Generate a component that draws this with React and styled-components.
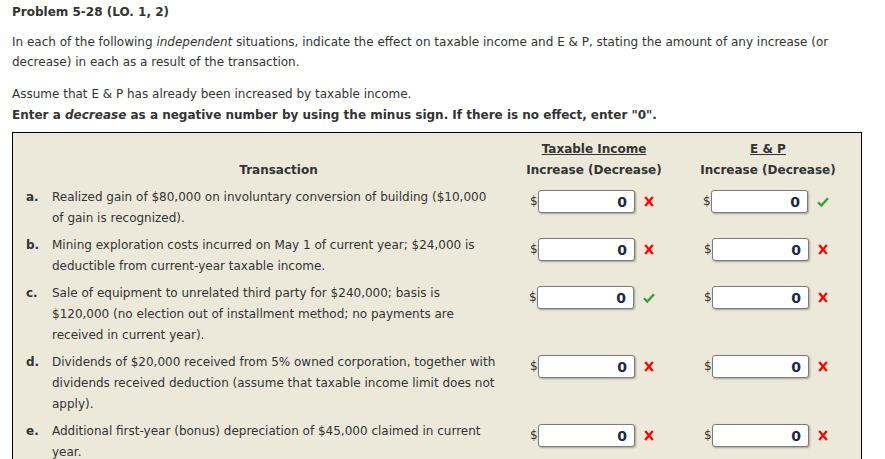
import React from "react";
import styled, { createGlobalStyle } from "styled-components";

const GlobalStyle = createGlobalStyle`
  html, body {
    margin: 0;
    padding: 0;
    background: #fff;
    overflow: hidden;
  }
  body {
    font-family: "DejaVu Sans", Verdana, sans-serif;
    font-size: 12px;
    color: #333;
  }
`;

const rows = [
  {
    letter: "a.",
    text: "Realized gain of $80,000 on involuntary conversion of building ($10,000 of gain is recognized).",
    ti: false,
    ep: true,
  },
  {
    letter: "b.",
    text: "Mining exploration costs incurred on May 1 of current year; $24,000 is deductible from current-year taxable income.",
    ti: false,
    ep: false,
  },
  {
    letter: "c.",
    text: "Sale of equipment to unrelated third party for $240,000; basis is $120,000 (no election out of installment method; no payments are received in current year).",
    ti: true,
    ep: false,
  },
  {
    letter: "d.",
    text: "Dividends of $20,000 received from 5% owned corporation, together with dividends received deduction (assume that taxable income limit does not apply).",
    ti: false,
    ep: false,
  },
  {
    letter: "e.",
    text: "Additional first-year (bonus) depreciation of $45,000 claimed in current year.",
    ti: false,
    ep: false,
  },
];

function Mark({ correct }) {
  if (correct) {
    return (
      <Icon width="12" height="10" viewBox="0 0 12 10">
        <path d="M1 5.2 L4.3 8.6 L11 1.2" fill="none" stroke="#3b9a3b" strokeWidth="2.3" />
      </Icon>
    );
  }
  return (
    <Icon width="10" height="11" viewBox="0 0 10 11">
      <path d="M1.2 1 L8.8 10 M8.8 1 L1.2 10" fill="none" stroke="#f00" strokeWidth="2.3" />
    </Icon>
  );
}

function Answer({ correct }) {
  return (
    <AnswerCell>
      <Dollar>$</Dollar>
      <AmountInput type="text" defaultValue="0" />
      <Mark correct={correct} />
    </AnswerCell>
  );
}

export default function App() {
  return (
    <Page>
      <GlobalStyle />
      <Title>Problem 5-28 (LO. 1, 2)</Title>
      <Para>
        In each of the following <em>independent</em> situations, indicate the effect on taxable income and E &amp; P, stating the amount of any increase (or decrease) in each as a result of the transaction.
      </Para>
      <Assume>Assume that E &amp; P has already been increased by taxable income.</Assume>
      <Instruction>
        Enter a <em>decrease</em> as a negative number by using the minus sign. If there is no effect, enter "0".
      </Instruction>

      <Box>
        <HeadRow>
          <span />
          <span />
          <HeadCell><u>Taxable Income</u></HeadCell>
          <HeadCell><u>E &amp; P</u></HeadCell>
        </HeadRow>
        <HeadRow $spaced>
          <span />
          <HeadCell>Transaction</HeadCell>
          <HeadCell>Increase (Decrease)</HeadCell>
          <HeadCell>Increase (Decrease)</HeadCell>
        </HeadRow>
        {rows.map((r) => (
          <ItemRow key={r.letter}>
            <Letter>{r.letter}</Letter>
            <ItemText>{r.text}</ItemText>
            <Answer correct={r.ti} />
            <Answer correct={r.ep} />
          </ItemRow>
        ))}
      </Box>
    </Page>
  );
}

const Page = styled.div`
  padding: 2px 12px 0 12px;
  width: 850px;
`;

const Title = styled.h3`
  margin: 0;
  font-size: 12px;
  font-weight: bold;
  line-height: 20px;
`;

const Para = styled.p`
  margin: 10px 0 0;
  line-height: 20px;
`;

const Assume = styled.p`
  margin: 12px 0 0;
  line-height: 21px;
`;

const Instruction = styled.p`
  margin: 0;
  font-weight: bold;
  line-height: 21px;
`;

const Box = styled.div`
  margin-top: 6px;
  background: #ece9da;
  border: 1px solid #000;
  padding: 6px 8px 40px 13px;
`;

const Row = styled.div`
  display: grid;
  grid-template-columns: 26px 453px 178px 170px;
`;

const HeadRow = styled(Row)`
  line-height: 21px;
  padding-bottom: ${(p) => (p.$spaced ? "3px" : "0")};
`;

const ItemRow = styled(Row)`
  line-height: 20.8px;
  padding: 3.25px 0;
`;

const HeadCell = styled.div`
  font-weight: bold;
  text-align: center;
`;

const Letter = styled.span`
  font-weight: bold;
`;

const ItemText = styled.span`
  padding-right: 6px;
`;

const AnswerCell = styled.div`
  display: flex;
  align-items: center;
  justify-content: center;
  align-self: start;
  margin-top: 3px;
  padding-right: 4px;
`;

const Dollar = styled.span`
  font-size: 12px;
  line-height: 23px;
  width: 8px;
`;

const AmountInput = styled.input`
  box-sizing: border-box;
  width: 97px;
  height: 23px;
  padding: 0 7px;
  border: 1px solid #7b7b7b;
  border-radius: 3px;
  box-shadow: 1px 1px 2px rgba(0, 0, 0, 0.3);
  background: #fff;
  font-family: "DejaVu Sans", Verdana, sans-serif;
  font-size: 14px;
  font-weight: bold;
  color: #1c2844;
  text-align: right;
  outline: none;
`;

const Icon = styled.svg`
  margin-left: 9px;
  flex: none;
`;
